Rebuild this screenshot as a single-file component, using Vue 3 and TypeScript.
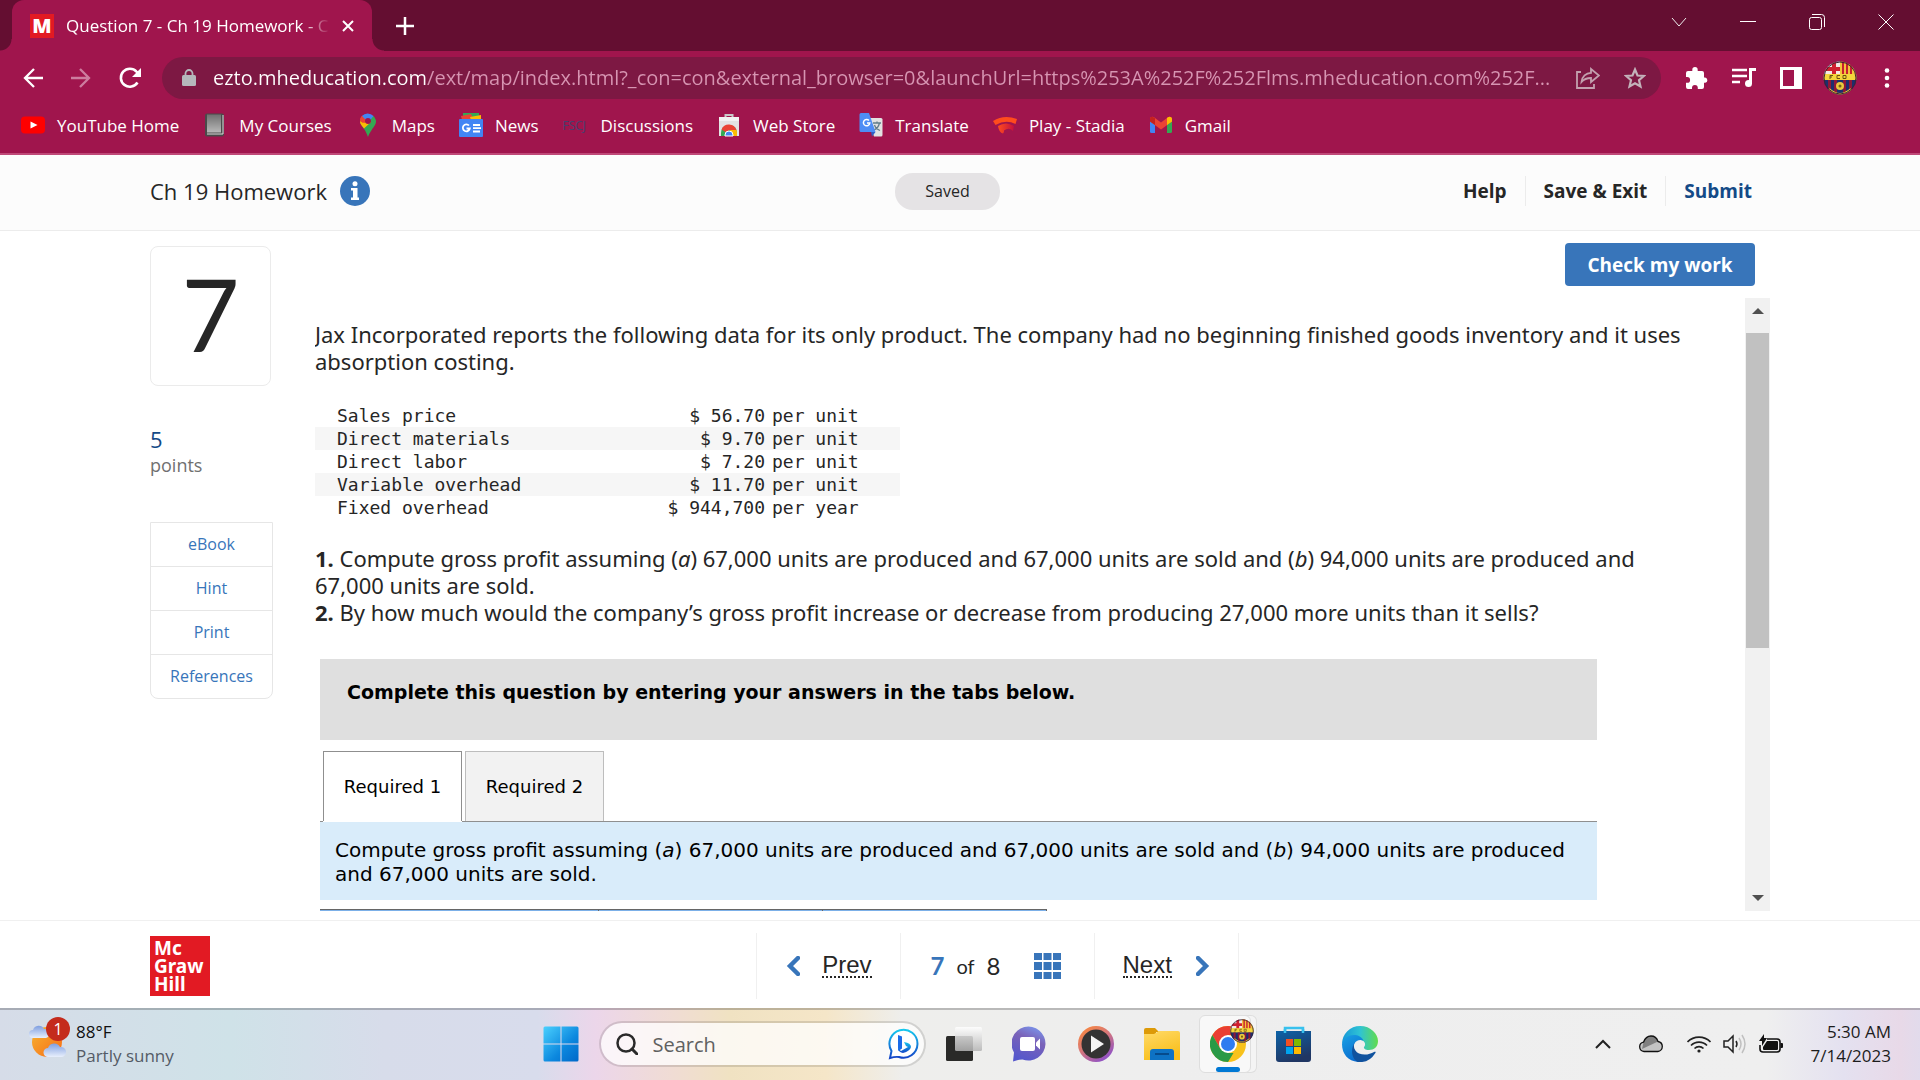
<script setup lang="ts">
import { ref } from 'vue'

interface CostRow {
  label: string
  amount: string
  unit: string
}

const costs: CostRow[] = [
  { label: 'Sales price', amount: '$ 56.70', unit: 'per unit' },
  { label: 'Direct materials', amount: '$ 9.70', unit: 'per unit' },
  { label: 'Direct labor', amount: '$ 7.20', unit: 'per unit' },
  { label: 'Variable overhead', amount: '$ 11.70', unit: 'per unit' },
  { label: 'Fixed overhead', amount: '$ 944,700', unit: 'per year' },
]

const resources: string[] = ['eBook', 'Hint', 'Print', 'References']
const requirements: string[] = ['Required 1', 'Required 2']
const activeTab = ref(0)
const address = ref(
  'ezto.mheducation.com/ext/map/index.html?_con=con&external_browser=0&launchUrl=https%253A%252F%252Flms.mheducation.com%252F...',
)
const query = ref('')
</script>

<template>
  <div class="desktop">
    <svg class="defs" aria-hidden="true">
      <defs>
        <symbol id="crest" viewBox="0 0 34 34">
          <clipPath id="crest-clip"><circle cx="17" cy="17" r="16.5" /></clipPath>
          <g clip-path="url(#crest-clip)">
            <rect width="34" height="34" fill="#1b2f6e" />
            <rect width="17" height="14" fill="#f3e9e4" />
            <path d="M9 0h4v14H9zM0 6h17v4H0z" fill="#cf2030" />
            <rect x="17" width="17" height="14" fill="#f3c33b" />
            <path d="M19 0h2v14h-2zM23 0h2v14h-2zM27 0h2v14h-2z" fill="#c8202f" />
            <rect y="13" width="34" height="6" fill="#f4d63c" />
            <path d="M10 14.500h-3v3.500M7 16h2M17 14.500h-3v3h3M20 14.500v3h3v-3z" stroke="#6b5310" fill="none" />
            <path d="M5 19h3v15H5zM11 19h3v15h-3zM20 19h3v15h-3zM26 19h3v15h-3z" fill="#8d1739" />
            <circle cx="17" cy="25" r="4" fill="#e9c93d" />
            <circle cx="17" cy="25" r="1.500" fill="#76601c" />
            <path d="M6 28q11 10 22 0" stroke="#e9c93d" fill="none" stroke-width="2" />
          </g>
          <circle cx="17" cy="17" r="16" fill="none" stroke="#3d2430" />
        </symbol>
      </defs>
    </svg>

    <header class="browser">
      <div class="tabstrip">
        <div class="tab">
          <span class="favicon">M</span>
          <span class="tab-title">Question 7 - Ch 19 Homework - C</span>
          <button class="icon-btn" aria-label="Close tab">
            <svg width="14" height="14" viewBox="0 0 14 14" stroke="#fff" stroke-width="2"><path d="M2 2l10 10M12 2L2 12" /></svg>
          </button>
        </div>
        <button class="icon-btn new-tab" aria-label="New tab">
          <svg width="18" height="18" viewBox="0 0 18 18" stroke="#fff" stroke-width="2.500"><path d="M9 0v18M0 9h18" /></svg>
        </button>
        <div class="window-controls">
          <button class="icon-btn" aria-label="Search tabs">
            <svg width="16" height="16" viewBox="0 0 16 16" fill="none" stroke="#eee"><path d="M1 4l7 8 7-8" /></svg>
          </button>
          <button class="icon-btn" aria-label="Minimize">
            <svg width="16" height="16" viewBox="0 0 16 16" fill="none" stroke="#fff"><path d="M0 7.500h16" /></svg>
          </button>
          <button class="icon-btn" aria-label="Restore">
            <svg width="16" height="16" viewBox="0 0 16 16" fill="none" stroke="#fff"><rect x=".5" y="3.500" width="12" height="12" rx="2" /><path d="M3 .5h9.500a3 3 0 0 1 3 3V13" /></svg>
          </button>
          <button class="icon-btn" aria-label="Close">
            <svg width="16" height="16" viewBox="0 0 16 16" fill="none" stroke="#fff"><path d="M.5.5l15 15M15.500.5l-15 15" /></svg>
          </button>
        </div>
      </div>

      <div class="toolbar">
        <div class="nav-buttons">
          <button class="icon-btn" aria-label="Back">
            <svg width="20" height="20" viewBox="0 0 20 20" fill="none" stroke="#fff" stroke-width="2.300"><path d="M20 10H2M11 1l-9 9 9 9" /></svg>
          </button>
          <button class="icon-btn" aria-label="Forward">
            <svg width="20" height="20" viewBox="0 0 20 20" fill="none" stroke="#cd7d9f" stroke-width="2.300"><path d="M0 10h18M9 1l9 9-9 9" /></svg>
          </button>
          <button class="icon-btn" aria-label="Reload">
            <svg width="22" height="22" viewBox="0 0 22 22"><path d="M18.500 15.500A9 9 0 1 1 17.500 4.600L20 7" fill="none" stroke="#fff" stroke-width="2.600" /><path d="M22 1v9h-9z" fill="#fff" /></svg>
          </button>
        </div>
        <div class="omnibox">
          <svg width="14" height="18" viewBox="0 0 14 18"><rect y="6" width="14" height="11" rx="1.500" fill="#b5b7bb" /><path d="M3.500 7V4.500a3.500 3.500 0 0 1 7 0V7" fill="none" stroke="#b5b7bb" stroke-width="1.800" /></svg>
          <input v-model="address" class="address" type="text" aria-label="Address" />
          <button class="icon-btn" aria-label="Share">
            <svg width="24" height="22" viewBox="0 0 24 22" fill="none" stroke="#c3a0ae" stroke-width="1.800"><path d="M5 5H1v16h17v-4" /><path d="M15 2l8 6.500-8 6.500v-4c-4 0-7 1-9.500 4C6 9.500 10 6 15 5.800z" /></svg>
          </button>
          <button class="icon-btn" aria-label="Bookmark">
            <svg width="22" height="22" viewBox="0 0 22 22" fill="none" stroke="#c3b2ba" stroke-width="2.200"><path d="M11 2.500l2.500 6 6.300.5-4.800 4.200 1.500 6.300L11 16.200 5.500 19.500 7 13.200 2.200 9l6.300-.5z" /></svg>
          </button>
        </div>
        <div class="extensions">
          <button class="icon-btn" aria-label="Extensions">
            <svg width="22" height="22" viewBox="0 0 22 22"><path d="M19.200 10.500H18V6a2 2 0 0 0-2-2h-4.300V2.800a2.700 2.700 0 0 0-5.400 0V4H2a2 2 0 0 0-2 2v4h1.200a2.900 2.900 0 0 1 0 5.800H0V20a2 2 0 0 0 2 2h4v-1.200a2.900 2.900 0 0 1 5.800 0V22H16a2 2 0 0 0 2-2v-4.200h1.200a2.700 2.700 0 0 0 0-5.300z" fill="#fff" /></svg>
          </button>
          <button class="icon-btn" aria-label="Media controls">
            <svg width="24" height="20" viewBox="0 0 24 20"><path d="M0 2h15M0 8h15M0 14h8" stroke="#fff" stroke-width="2.500" /><path d="M17 0h7v3h-4v13h-3z" fill="#fff" /><circle cx="16.500" cy="15.500" r="3.500" fill="#fff" /></svg>
          </button>
          <button class="icon-btn" aria-label="Side panel">
            <svg width="22" height="22" viewBox="0 0 22 22"><path d="M0 0h22v22H0zM3 3v16h11V3z" fill="#fff" fill-rule="evenodd" /></svg>
          </button>
          <button class="icon-btn profile" aria-label="Profile">
            <svg width="34" height="34"><use href="#crest" /></svg>
          </button>
          <button class="icon-btn" aria-label="Menu">
            <svg width="6" height="20" viewBox="0 0 6 20" fill="#fff"><circle cx="3" cy="2.500" r="2.300" /><circle cx="3" cy="10" r="2.300" /><circle cx="3" cy="17.500" r="2.300" /></svg>
          </button>
        </div>
      </div>

      <nav class="bookmarks" aria-label="Bookmarks">
        <a href="#">
          <svg width="24" height="24" viewBox="0 0 24 24"><rect y="3.500" width="24" height="17" rx="4" fill="#f00" /><path d="M9.500 8.500l7 3.500-7 3.500z" fill="#fff" /></svg>
          <span>YouTube Home</span>
        </a>
        <a href="#">
          <svg width="24" height="24" viewBox="0 0 24 24"><defs><linearGradient id="book" x2="0" y2="1"><stop stop-color="#707070" /><stop offset="1" stop-color="#b8b8b8" /></linearGradient></defs><rect x="2" y=".5" width="19" height="23" rx="2" fill="#4a4a4a" /><rect x="4" y="1.500" width="14" height="18" fill="url(#book)" /><path d="M4 21h16V2" fill="none" stroke="#ddd" /></svg>
          <span>My Courses</span>
        </a>
        <a href="#">
          <svg width="24" height="24" viewBox="0 0 24 24"><path d="M6 13c-1.300-2-2-3.500-2-5l4 .2 4-3.700L17.500 3c1.700 2 2.500 4 2.500 5 0 4-2.500 6-4 8.500-1.500 2.500-3 4-4 7.500-1-3-2-5.500-6-11z" fill="#34a853" /><path d="M4 8c0 2 .7 3.500 2 5l2 2.600L15 9z" fill="#fbbc04" /><path d="M5.800 3C4.500 4.500 4 6 4 8l5 2 3-6z" fill="#ea4335" /><path d="M5.800 3a8 8 0 0 1 11.700 0L13 8.500 9 7z" fill="#4285f4" /><path d="M5.800 3L10 7 7 10 4 8c0-2 .5-3.500 1.800-5z" fill="#ea4335" /><circle cx="12" cy="8" r="3" fill="#a0154d" /></svg>
          <span>Maps</span>
        </a>
        <a href="#">
          <svg width="24" height="24" viewBox="0 0 24 24"><path d="M4 0h16v6H4z" fill="#34a853" /><path d="M2 3l10-2 3 6H3z" fill="#ea4335" /><path d="M11 4l11-2v5H12z" fill="#fbbc04" /><rect y="6" width="24" height="18" rx="1" fill="#4285f4" /><path d="M10 12.500a3.500 3.500 0 1 0 .8 3H7.500M14 12h7M14 15.200h8M14 18.500h7" fill="none" stroke="#fff" stroke-width="1.800" /></svg>
          <span>News</span>
        </a>
        <a href="#">
          <span class="fscj">FSCJ</span>
          <span>Discussions</span>
        </a>
        <a href="#">
          <svg width="24" height="24" viewBox="0 0 24 24"><path d="M8.500 5V2h7v3" fill="none" stroke="#c9c9c9" stroke-width="2" /><path d="M2 4h20v19H2z" fill="#e3e3e3" /><path d="M2 4h20v4H2z" fill="#f2f2f2" /><path d="M4 23v-3a8 8 0 0 1 16 0v3z" fill="#34a853" /><path d="M4.500 16.500A8 8 0 0 1 19.500 17H12l-2 3z" fill="#ea4335" /><path d="M13 17h6.500a8 8 0 0 1 .5 3v3h-6z" fill="#fbbc04" /><path d="M8 23v-1a4 4 0 0 1 8 0v1z" fill="#4285f4" stroke="#fff" /></svg>
          <span>Web Store</span>
        </a>
        <a href="#">
          <svg width="24" height="24" viewBox="0 0 24 24"><path d="M9 5h13a1.500 1.500 0 0 1 1.500 1.500V22a1.500 1.500 0 0 1-1.500 1.500h-7z" fill="#e2e2e2" /><path d="M14 10h8M18 8.500V10M20.500 10c-1 4-3 6-5.500 7M15.500 12c1 3 3 4.500 5.500 5.500" stroke="#607d8b" fill="none" stroke-width="1.300" /><path d="M2 0h8l6.500 19H2a1.500 1.500 0 0 1-1.500-1.500v-16A1.500 1.500 0 0 1 2 0z" fill="#4e8df5" /><path d="M12 19h4.500L13 23.500z" fill="#2f5fc4" /><path d="M10 7.500a3.200 3.200 0 1 0 .8 2.500H8" fill="none" stroke="#fff" stroke-width="1.500" /></svg>
          <span>Translate</span>
        </a>
        <a href="#">
          <svg width="24" height="24" viewBox="0 0 24 24"><defs><linearGradient id="stadia"><stop stop-color="#ff4c1d" /><stop offset="1" stop-color="#c3103f" /></linearGradient></defs><path d="M0 8q11-7 24-2l-1.500 5Q13 6 2.500 12z" fill="#ff4c1d" /><path d="M5 13q8-5 16 0l-1 5q-4-4-9-.5.500 1.500-1 3-4-1-5-7.500z" fill="url(#stadia)" /></svg>
          <span>Play - Stadia</span>
        </a>
        <a href="#">
          <svg width="24" height="24" viewBox="0 0 24 24"><path d="M1 6h5v14H2.500A1.500 1.500 0 0 1 1 18.500z" fill="#4285f4" /><path d="M18 6h5v12.500a1.500 1.500 0 0 1-1.500 1.500H18z" fill="#34a853" /><path d="M1 6c0-2 2.500-3 4-1.700l7 5.200 7-5.200C20.500 3 23 4 23 6v2.500L12 16.500 1 8.500z" fill="#ea4335" /><path d="M18 5l1-.700C20.500 3 23 4 23 6v2.500L18 12z" fill="#fbbc04" /><path d="M1 6c0-1.500 1.500-2.500 3-2l2 1.200V12L1 8.500z" fill="#c5221f" /></svg>
          <span>Gmail</span>
        </a>
      </nav>
    </header>

    <div class="site">
      <header class="site-header">
        <div class="title">
          <span>Ch 19 Homework</span>
          <button class="icon-btn" aria-label="Assignment information">
            <svg width="30" height="30" viewBox="0 0 30 30"><circle cx="15" cy="15" r="15" fill="#3875ba" /><circle cx="15" cy="7.800" r="2.500" fill="#fff" /><path d="M11 12h6.500v9.500H19V24h-8v-2.500h2v-7h-2z" fill="#fff" /></svg>
          </button>
        </div>
        <span class="saved">Saved</span>
        <div class="actions">
          <a href="#">Help</a>
          <a href="#">Save &amp; Exit</a>
          <a href="#" class="submit">Submit</a>
        </div>
      </header>

      <main class="main">
        <aside class="side">
          <div class="number">7</div>
          <div class="points"><strong>5</strong><span>points</span></div>
          <nav class="resources" aria-label="Resources">
            <a v-for="item in resources" :key="item" href="#">{{ item }}</a>
          </nav>
        </aside>

        <section class="work">
          <div class="check-row"><button class="check">Check my work</button></div>
          <div class="scroll">
            <article class="question">
              <p>Jax Incorporated reports the following data for its only product. The company had no beginning finished goods inventory and it uses absorption costing.</p>
              <table class="costs">
                <tbody>
                  <tr v-for="row in costs" :key="row.label">
                    <th scope="row">{{ row.label }}</th>
                    <td class="amount">{{ row.amount }}</td>
                    <td class="unit">{{ row.unit }}</td>
                  </tr>
                </tbody>
              </table>
              <p><b>1.</b> Compute gross profit assuming (<i>a</i>) 67,000 units are produced and 67,000 units are sold and (<i>b</i>) 94,000 units are produced and 67,000 units are sold.</p>
              <p><b>2.</b> By how much would the company’s gross profit increase or decrease from producing 27,000 more units than it sells?</p>
              <div class="answer">
                <h2>Complete this question by entering your answers in the tabs below.</h2>
                <div class="tabs" role="tablist">
                  <button
                    v-for="(name, i) in requirements"
                    :key="name"
                    role="tab"
                    :aria-selected="activeTab === i"
                    :class="{ active: activeTab === i }"
                    @click="activeTab = i"
                  >{{ name }}</button>
                </div>
                <p class="prompt">Compute gross profit assuming (<i>a</i>) 67,000 units are produced and 67,000 units are sold and (<i>b</i>) 94,000 units are produced and 67,000 units are sold.</p>
                <div class="sheet"><span></span><span></span><span></span></div>
              </div>
            </article>
            <div class="scrollbar" aria-hidden="true">
              <svg width="12" height="6" viewBox="0 0 12 6"><path d="M6 0l6 6H0z" fill="#505050" /></svg>
              <div class="track"><div class="thumb"></div></div>
              <svg width="12" height="6" viewBox="0 0 12 6"><path d="M0 0h12L6 6z" fill="#505050" /></svg>
            </div>
          </div>
        </section>
      </main>

      <footer class="site-footer">
        <div class="logo"><span>Mc</span><span>Graw</span><span>Hill</span></div>
        <nav class="pager" aria-label="Questions">
          <div class="cell prev">
            <svg width="14" height="20" viewBox="0 0 14 20" fill="none" stroke="#3875ba" stroke-width="4.500"><path d="M12 2l-8 8 8 8" stroke-linecap="round" /></svg>
            <a href="#">Prev</a>
          </div>
          <div class="cell count">
            <b>7</b><span>of</span><span class="total">8</span>
            <button class="icon-btn" aria-label="Question list">
              <svg width="27" height="26" viewBox="0 0 27 26" fill="#3875ba"><path d="M0 0h8v7H0zM9.500 0h8v7h-8zM19 0h8v7h-8zM0 9h8v8H0zM9.500 9h8v8h-8zM19 9h8v8h-8zM0 19h8v7H0zM9.500 19h8v7h-8zM19 19h8v7h-8z" /></svg>
            </button>
          </div>
          <div class="cell next">
            <a href="#">Next</a>
            <svg width="14" height="20" viewBox="0 0 14 20" fill="none" stroke="#3875ba" stroke-width="4.500"><path d="M2 2l8 8-8 8" stroke-linecap="round" /></svg>
          </div>
        </nav>
      </footer>
    </div>

    <div class="taskbar">
      <button class="weather">
        <svg width="38" height="44" viewBox="0 0 38 44">
          <defs>
            <linearGradient id="sun" x2="1" y2="1"><stop stop-color="#f6b432" /><stop offset="1" stop-color="#f76b16" /></linearGradient>
            <linearGradient id="puff" x2="0" y2="1"><stop stop-color="#7f9fe0" /><stop offset="1" stop-color="#e8effc" /></linearGradient>
          </defs>
          <circle cx="18" cy="20" r="15" fill="url(#sun)" />
          <path d="M4 16a4 4 0 0 1 0-8 6 6 0 0 1 11-1 4.500 4.500 0 0 1 2 9z" fill="url(#puff)" />
          <path d="M19 35a4.500 4.500 0 0 1 0-9 6.500 6.500 0 0 1 12-1 5 5 0 0 1 2 10z" fill="url(#puff)" />
        </svg>
        <span class="badge">1</span>
        <span class="forecast"><b>88°F</b><span>Partly sunny</span></span>
      </button>

      <div class="apps">
        <button class="icon-btn" aria-label="Start">
          <svg width="36" height="36" viewBox="0 0 36 36"><defs><linearGradient id="win" gradientUnits="userSpaceOnUse" x1="0" y1="0" x2="36" y2="36"><stop stop-color="#4cd2ff" /><stop offset=".6" stop-color="#0b87de" /><stop offset="1" stop-color="#0067c8" /></linearGradient></defs><path d="M2 .5h15.500v17H.5V2A1.500 1.500 0 0 1 2 .5zM18.500.5H34A1.500 1.500 0 0 1 35.500 2v15.500h-17zM.5 18.500h17v17H2A1.500 1.500 0 0 1 .5 34zM18.500 18.500h17V34a1.500 1.500 0 0 1-1.500 1.500H18.500z" fill="url(#win)" /></svg>
        </button>
        <label class="search">
          <svg width="22" height="22" viewBox="0 0 22 22" fill="none" stroke="#2a2a2a" stroke-width="2.500"><circle cx="10" cy="10" r="8.500" /><path d="M16 16l5 5" stroke-width="3" stroke-linecap="round" /></svg>
          <input v-model="query" type="text" placeholder="Search" aria-label="Search" />
          <svg width="32" height="32" viewBox="0 0 32 32"><defs><linearGradient id="bing" x2="0" y2="1"><stop stop-color="#16c8ee" /><stop offset="1" stop-color="#1445c8" /></linearGradient></defs><path d="M2 30l1.500-7A14 14 0 1 1 11 29q-4-.5-9 1z" fill="#fff" stroke="url(#bing)" stroke-width="2" /><path d="M10 7l4 1.500v12l-3.500 2.500q-.5-1-.5-3z" fill="#1a6be8" /><path d="M10 20.500q1 4 5 4.500 7-2 8-6 0-4-7-5l2 4 2 1-7 4z" fill="url(#bing)" /></svg>
        </label>
        <button class="icon-btn" aria-label="Task view">
          <svg width="36" height="36" viewBox="0 0 36 36"><defs><linearGradient id="pane" x2="0" y2="1"><stop stop-color="#fff" /><stop offset="1" stop-color="#b4b4b4" /></linearGradient></defs><rect y="10" width="27" height="25" rx="1.500" fill="#2a2a28" /><rect x="9" y="1" width="27" height="24" rx="1.500" fill="url(#pane)" opacity=".86" /></svg>
        </button>
        <button class="icon-btn" aria-label="Chat">
          <svg width="36" height="36" viewBox="0 0 36 36"><defs><linearGradient id="chat" x1=".8" x2=".4" y2="1"><stop stop-color="#7a97ee" /><stop offset=".4" stop-color="#7a62b8" /><stop offset="1" stop-color="#5557cc" /></linearGradient></defs><path d="M1 35.500l1-9A17 17 0 1 1 10.500 33.500q-4.500 0-9.500 2z" fill="url(#chat)" /><rect x="8" y="11" width="15" height="14" rx="2" fill="#fff" /><path d="M24 16.500l4-4v11l-4-4z" fill="#fff" /></svg>
        </button>
        <button class="icon-btn" aria-label="Media player">
          <svg width="36" height="36" viewBox="0 0 36 36"><defs><linearGradient id="ring" x2=".7" y2="1"><stop stop-color="#ff8a32" /><stop offset=".5" stop-color="#d87878" /><stop offset="1" stop-color="#8d50c8" /></linearGradient></defs><circle cx="18" cy="18" r="18" fill="url(#ring)" /><circle cx="18" cy="18" r="14.500" fill="#333" /><path d="M13 9.500L26 18l-13 8.500z" fill="#f4f4f4" /></svg>
        </button>
        <button class="icon-btn" aria-label="File Explorer">
          <svg width="36" height="36" viewBox="0 0 36 36"><defs><linearGradient id="folder" x2=".4" y2="1"><stop stop-color="#ffda68" /><stop offset="1" stop-color="#f9bf1c" /></linearGradient></defs><path d="M0 4a2 2 0 0 1 2-2h9l4 4h-3v4H0z" fill="#dd9a08" /><path d="M0 8h10l5-3h19a2 2 0 0 1 2 2v27H0z" fill="url(#folder)" /><path d="M6 34v-8a3 3 0 0 1 3-3h18a3 3 0 0 1 3 3v8z" fill="#0d72c4" /><path d="M11 28h14" stroke="#064b8c" stroke-width="2" /></svg>
        </button>
        <button class="icon-btn running" aria-label="Chrome">
          <svg width="36" height="36" viewBox="0 0 36 36"><circle cx="18" cy="18" r="18" fill="#f8c21c" /><path d="M18 0a18 18 0 0 1 15.600 9H18l-7.800 13.500L2.400 9A18 18 0 0 1 18 0z" fill="#ea3f33" /><path d="M2.400 9l7.800 13.500L18 27h5.500L18 36A18 18 0 0 1 2.400 9z" fill="#2a9a46" /><circle cx="18" cy="18" r="9" fill="#fff" /><circle cx="18" cy="18" r="7" fill="#2f7cf0" /></svg>
          <svg class="crest" width="24" height="24"><use href="#crest" /></svg>
        </button>
        <button class="icon-btn" aria-label="Microsoft Store">
          <svg width="36" height="36" viewBox="0 0 36 36"><defs><linearGradient id="bag" x2=".4" y2="1"><stop stop-color="#0d63a8" /><stop offset="1" stop-color="#203663" /></linearGradient></defs><path d="M9 7V2h18v5" fill="none" stroke="#38c1ee" stroke-width="2.500" /><path d="M0 5h35v28a3 3 0 0 1-3 3H3a3 3 0 0 1-3-3z" fill="url(#bag)" /><path d="M9 7V3M27 7V3" stroke="#38c1ee" stroke-width="2.500" /><path d="M10 13h7v7h-7z" fill="#f25022" /><path d="M18 13h7v7h-7z" fill="#7fba00" /><path d="M10 21h7v7h-7z" fill="#00a4ef" /><path d="M18 21h7v7h-7z" fill="#ffb900" /></svg>
        </button>
        <button class="icon-btn" aria-label="Edge">
          <svg width="36" height="36" viewBox="0 0 36 36"><defs><linearGradient id="edge-top"><stop stop-color="#1697d8" /><stop offset=".5" stop-color="#2fc3d4" /><stop offset="1" stop-color="#62dc4c" /></linearGradient><linearGradient id="edge-low" x2=".5" y2="1"><stop stop-color="#19a0e4" /><stop offset="1" stop-color="#0a6bce" /></linearGradient></defs><path d="M0 18A18 18 0 0 1 18 0c11 0 18 8 18 15 0 6-4 9-9 9-4 0-5.500-1.500-5-3 2-2 1.500-6-3-7C12 12 4 11 0 18z" fill="url(#edge-top)" /><path d="M0 18c1-6 7-9 12-9 4 0 8 2 9.500 5.500C14 12 10 19 12 24c2 6 8 8 12 8-2 2-5 4-8 4C6 35 0 28 0 18z" fill="url(#edge-low)" /><path d="M14 15c-4 4-2 10 3 12.500 5 2 11 1 15-1.500 2-.8 2 .2 1 1.500A18 18 0 0 1 16 36C9 33 8 21 14 15z" fill="#10529e" /></svg>
        </button>
      </div>

      <div class="tray">
        <button class="icon-btn" aria-label="Show hidden icons">
          <svg width="16" height="10" viewBox="0 0 16 10" fill="none" stroke="#222" stroke-width="2"><path d="M1 9l7-7 7 7" /></svg>
        </button>
        <button class="icon-btn onedrive" aria-label="OneDrive">
          <svg width="24" height="18" viewBox="0 0 24 18"><path d="M5 16.500a4.700 4.700 0 0 1-.5-9.300C6 3 9 1 12 1c3.500 0 6 2.500 7 5.500 3 .500 4.300 2.500 4.300 5a5 5 0 0 1-4.500 5z" fill="#c4c4c4" /><path d="M4.500 7.200C6 3 9 1 12 1c3.500 0 6 2.500 7 5.500L3 14z" fill="#808080" /><path d="M5 16.500a4.700 4.700 0 0 1-.5-9.300C6 3 9 1 12 1c3.500 0 6 2.500 7 5.500 3 .500 4.300 2.500 4.300 5a5 5 0 0 1-4.500 5z" fill="none" stroke="#111" stroke-width="1.300" /></svg>
        </button>
        <button class="status" aria-label="Network, volume and battery">
          <svg width="24" height="18" viewBox="0 0 24 18" fill="none" stroke="#222" stroke-width="1.700"><path d="M.5 7a16 16 0 0 1 23 0M4 10.500a11 11 0 0 1 16 0M7.500 13.500a6.500 6.500 0 0 1 9 0" /><circle cx="12" cy="16" r="1.600" fill="#222" stroke="none" /></svg>
          <svg width="24" height="20" viewBox="0 0 24 20" fill="none" stroke="#222" stroke-width="1.500"><path d="M1 7h4l5-5v16l-5-5H1zM13 7q2 3 0 6" /><path d="M16 4q4 6 0 12M19 1q6 9 0 18" stroke="#c0c0c0" /></svg>
          <svg width="24" height="20" viewBox="0 0 24 20"><path d="M8 5h10a3 3 0 0 1 3 3v7a3 3 0 0 1-3 3H4a3 3 0 0 1-3-3v-4" fill="none" stroke="#111" stroke-width="1.600" /><path d="M8 7h10a1 1 0 0 1 1 1v7a1 1 0 0 1-1 1H5a1 1 0 0 1-1-1v-2zM21.500 9H23a1 1 0 0 1 1 1v3a1 1 0 0 1-1 1h-1.500zM5 0v4h3l-5 8V7H0z" fill="#111" /></svg>
        </button>
        <button class="clock"><span>5:30 AM</span><span>7/14/2023</span></button>
      </div>
    </div>
  </div>
</template>

<style>
body {
  margin: 0;
}
</style>

<style scoped>
* {
  box-sizing: border-box;
}
.desktop {
  display: flex;
  flex-direction: column;
  height: 100vh;
  overflow: hidden;
  font-family: 'Open Sans', 'Noto Sans', sans-serif;
  background: #fff;
}
.defs {
  position: absolute;
  width: 0;
  height: 0;
}
svg {
  display: block;
  flex: none;
}
button {
  font: inherit;
  color: inherit;
  border: 0;
  padding: 0;
  background: none;
}
a {
  text-decoration: none;
  color: inherit;
}
.icon-btn {
  display: flex;
  align-items: center;
  justify-content: center;
  flex: none;
}

/* Browser chrome */
.browser {
  flex: none;
  background: #a0154d;
  border-bottom: 2px solid #bf4978;
  color: #fff;
  font-size: 17px;
}
.tabstrip {
  display: flex;
  align-items: center;
  height: 51px;
  padding: 0 26px 0 12px;
  background: #640e31;
}
.tab {
  position: relative;
  display: flex;
  align-items: center;
  width: 360px;
  height: 51px;
  padding: 0 17px 0 18px;
  border-radius: 12px 12px 0 0;
  background: #a0154d;
}
.tab::before,
.tab::after {
  content: '';
  position: absolute;
  bottom: 0;
  width: 12px;
  height: 12px;
}
.tab::before {
  right: 100%;
  background: radial-gradient(circle at 0 0, #640e31 11px, #a0154d 12px);
}
.tab::after {
  left: 100%;
  background: radial-gradient(circle at 100% 0, #640e31 11px, #a0154d 12px);
}
.favicon {
  flex: none;
  width: 24px;
  height: 24px;
  margin-right: 12px;
  background: #e21a23;
  font-size: 20px;
  font-weight: 800;
  line-height: 23px;
  text-align: center;
}
.tab-title {
  flex: 1;
  white-space: nowrap;
  mask-image: linear-gradient(90deg, #000 86%, transparent 96%);
}
.new-tab {
  margin-left: 24px;
}
.window-controls {
  display: flex;
  gap: 53px;
  margin: 0 0 8px auto;
}
.toolbar {
  display: flex;
  align-items: center;
  height: 54px;
  padding: 0 30px 0 23px;
}
.nav-buttons {
  display: flex;
  gap: 28px;
  width: 139px;
}
.omnibox {
  display: flex;
  align-items: center;
  flex: 1;
  height: 42px;
  padding: 0 15px 0 20px;
  border-radius: 21px;
  background: #7d1843;
}
.address {
  flex: 1;
  min-width: 0;
  margin: 0 22px 0 17px;
  padding: 0;
  border: 0;
  font: inherit;
  font-size: 20px;
  line-height: 28px;
  color: transparent;
  background: linear-gradient(90deg, #fff 213px, #d795b2 213px);
  background-clip: text;
}
.omnibox .icon-btn + .icon-btn {
  margin-left: 24px;
}
.extensions {
  display: flex;
  align-items: center;
  gap: 24px;
  margin-left: 25px;
}
.profile {
  margin: 0 3px 0 -3px;
}
.bookmarks {
  display: flex;
  gap: 24px;
  height: 48px;
  padding: 8px 21px;
}
.bookmarks a {
  display: flex;
  align-items: center;
  gap: 12px;
  height: 24px;
  white-space: nowrap;
}
.fscj {
  width: 26px;
  font-size: 12px;
  color: #45406f;
}

/* Course site */
.site {
  display: flex;
  flex-direction: column;
  flex: 1;
  min-height: 0;
  color: #262626;
}
.site-header {
  display: grid;
  grid-template-columns: 1fr auto 1fr;
  align-items: center;
  flex: none;
  height: 76px;
  padding: 0 168px 3px 150px;
  border-bottom: 1px solid #ececec;
  background: #fcfcfc;
}
.title {
  display: flex;
  align-items: center;
  gap: 13px;
  font-size: 22px;
}
.saved {
  width: 105px;
  margin-right: 7px;
  border-radius: 18px;
  background: #e5e3e5;
  font-size: 16px;
  line-height: 37px;
  text-align: center;
}
.actions {
  display: flex;
  justify-content: flex-end;
  font-size: 19px;
  font-weight: 700;
}
.actions a {
  padding: 0 18px;
  line-height: 30px;
}
.actions a + a {
  border-left: 1px solid #ececec;
}
.actions .submit {
  padding-right: 0;
  color: #144a87;
}
.main {
  display: flex;
  flex: 1;
  gap: 42px;
  min-height: 0;
  padding: 12px 150px 9px;
}
.side {
  flex: none;
  width: 123px;
  padding-top: 3px;
}
.number {
  width: 121px;
  height: 140px;
  border: 1px solid #ebebeb;
  border-radius: 8px;
  font-family: Lato, sans-serif;
  font-size: 100px;
  line-height: 132px;
  text-align: center;
}
.points {
  display: flex;
  flex-direction: column;
  margin-top: 40px;
  font-size: 18px;
  line-height: 26px;
  color: #707070;
}
.points strong {
  font-size: 22px;
  font-weight: 400;
  color: #144a87;
}
.resources {
  display: flex;
  flex-direction: column;
  margin-top: 44px;
  border: 1px solid #e6e6e6;
  border-radius: 0 0 8px 8px;
  font-size: 16px;
  line-height: 43px;
  text-align: center;
  color: #3875ba;
}
.resources a + a {
  border-top: 1px solid #e6e6e6;
}
.work {
  display: flex;
  flex-direction: column;
  flex: 1;
  gap: 12px;
  min-width: 0;
}
.check-row {
  display: flex;
  justify-content: flex-end;
  padding-right: 15px;
}
.check {
  width: 190px;
  height: 43px;
  border-radius: 4px;
  background: #3875ba;
  color: #fff;
  font-size: 19px;
  font-weight: 700;
}
.scroll {
  display: flex;
  flex: 1;
  min-height: 0;
}
.question {
  flex: 1;
  min-width: 0;
  overflow: hidden;
  padding: 23px 36px 0 0;
  font-family: 'Noto Sans', 'Open Sans', sans-serif;
  font-size: 22px;
  line-height: 27px;
}
.question p {
  margin: 0;
}
.costs {
  width: 585px;
  margin: 29px 0 26px;
  border-collapse: collapse;
  font-family: 'DejaVu Sans Mono', monospace;
  font-size: 18px;
  line-height: 23px;
}
.costs tr:nth-child(even) {
  background: #f6f6f6;
}
.costs th {
  padding: 0 0 0 22px;
  font-weight: 400;
  text-align: left;
}
.amount {
  padding: 0;
  text-align: right;
}
.unit {
  width: 135px;
  padding: 0 0 0 7px;
}
.answer {
  margin: 33px 112px 0 5px;
  color: #000;
  font-family: 'DejaVu Sans', sans-serif;
}
.answer h2 {
  height: 81px;
  margin: 0 0 11px;
  padding: 20px 27px;
  background: #dfdfdf;
  font-size: 19px;
  line-height: 26px;
}
.tabs {
  display: flex;
  gap: 3px;
  padding-left: 3px;
  border-bottom: 1px solid #8f8f8f;
}
.tabs button {
  width: 139px;
  height: 70px;
  border: 1px solid #bdbdbd;
  border-bottom: 0;
  background: #f2f2f2;
  font-size: 18px;
}
.tabs .active {
  border-color: #8f8f8f;
  background: #fff;
  box-shadow: 0 1px #fff;
}
.prompt {
  height: 78px;
  padding: 16px 15px;
  background: #d9ecfa;
  font-size: 20px;
  line-height: 24px;
}
.sheet {
  display: grid;
  grid-template-columns: 279px 224px 224px;
  height: 40px;
  margin-top: 9px;
}
.sheet span {
  border-top: 1px solid #666;
  border-right: 1px solid #666;
  background: #7cb0e8;
}
.scrollbar {
  display: flex;
  flex-direction: column;
  align-items: center;
  width: 25px;
  padding: 10px 1px;
  background: #f1f1f1;
}
.track {
  flex: 1;
  align-self: stretch;
  padding: 19px 0;
}
.thumb {
  height: 58%;
  background: #c1c1c1;
}
.site-footer {
  display: flex;
  align-items: center;
  flex: none;
  height: 88px;
  padding: 2px 150px 0;
  border-top: 1px solid #f0f0f0;
}
.logo {
  display: flex;
  flex-direction: column;
  width: 60px;
  height: 60px;
  padding: 3px 4px;
  background: #e21a23;
  color: #fff;
  font-family: 'Noto Sans', sans-serif;
  font-size: 19px;
  font-weight: 700;
  line-height: 18px;
}
.pager {
  display: flex;
  margin: 0 auto;
  padding-left: 14px;
  font-family: 'Liberation Sans', sans-serif;
  font-size: 24px;
}
.cell {
  display: flex;
  align-items: center;
  justify-content: space-between;
  height: 66px;
  border-left: 1px solid #f0f0f0;
}
.pager a {
  border-bottom: 2px dotted #262626;
  line-height: 22px;
}
.prev {
  width: 144px;
  padding: 0 28px 0 29px;
}
.next {
  width: 145px;
  padding: 0 28px;
  border-right: 1px solid #f0f0f0;
}
.count {
  width: 194px;
  padding: 0 32px 0 30px;
  font-family: Lato, sans-serif;
  font-size: 20px;
}
.count b {
  color: #3875ba;
  font-size: 24px;
}
.total {
  margin-right: 22px;
  font-size: 24px;
}

/* Taskbar */
.taskbar {
  display: grid;
  grid-template-columns: 1fr auto 1fr;
  align-items: center;
  flex: none;
  height: 72px;
  padding-bottom: 2px;
  border-top: 2px solid rgba(0, 0, 0, 0.22);
  background: linear-gradient(90deg, #d6dce8 0%, #cfe2e8 12%, #d7dcea 20%, #d8dcec 28%, #ecd6ea 31%, #f0dcd4 35%, #f0e2c2 38%, #f5e6c8 43%, #eeeeec 47%, #eee 60%, #efefef 92%, #e4e1f0 96%, #e8d9e8 99%, #e2dbec 100%) border-box;
}
.weather {
  position: relative;
  display: flex;
  align-items: center;
  gap: 9px;
  padding-left: 29px;
  text-align: left;
}
.badge {
  position: absolute;
  top: -3px;
  left: 46px;
  width: 24px;
  border-radius: 12px;
  background: #c42b1c;
  color: #fff;
  font-size: 16px;
  line-height: 24px;
  text-align: center;
}
.forecast {
  display: flex;
  flex-direction: column;
  font-size: 17px;
  line-height: 24px;
  color: #555b66;
}
.forecast b {
  font-weight: 400;
  color: #111;
}
.apps {
  display: flex;
  align-items: center;
  gap: 30px;
}
.search {
  display: flex;
  align-items: center;
  width: 327px;
  height: 46px;
  margin: 0 -10px;
  padding: 0 4px 0 15px;
  border: 2px solid rgba(0, 0, 0, 0.12);
  border-radius: 23px;
  background: rgba(255, 255, 255, 0.75) padding-box;
}
.search input {
  flex: 1;
  min-width: 0;
  padding: 0 0 0 15px;
  border: 0;
  background: none;
  font: inherit;
  font-size: 20px;
}
.search input::placeholder {
  color: #606060;
}
.running {
  position: relative;
  width: 52px;
  height: 58px;
  margin: 0 -5px 0 -11px;
  padding-left: 6px;
  border: 1px solid #dedede;
  border-radius: 6px;
  background: #f8f8f8;
  box-shadow: 6px 0 0 -1px #f4f4f4, 6px 0 0 0 #dedede;
}
.running::after {
  content: '';
  position: absolute;
  bottom: 0;
  left: 16px;
  width: 24px;
  height: 5px;
  border-radius: 3px;
  background: #0078d4;
}
.crest {
  position: absolute;
  top: 3px;
  right: -4px;
}
.tray {
  display: flex;
  align-items: center;
  justify-content: flex-end;
  padding-right: 29px;
  color: #1c1c1c;
}
.onedrive {
  margin: 0 24px 0 28px;
}
.status {
  display: flex;
  align-items: center;
  gap: 12px;
}
.clock {
  display: flex;
  flex-direction: column;
  align-items: flex-end;
  margin-left: 27px;
  font-size: 17px;
  line-height: 24px;
}
</style>
